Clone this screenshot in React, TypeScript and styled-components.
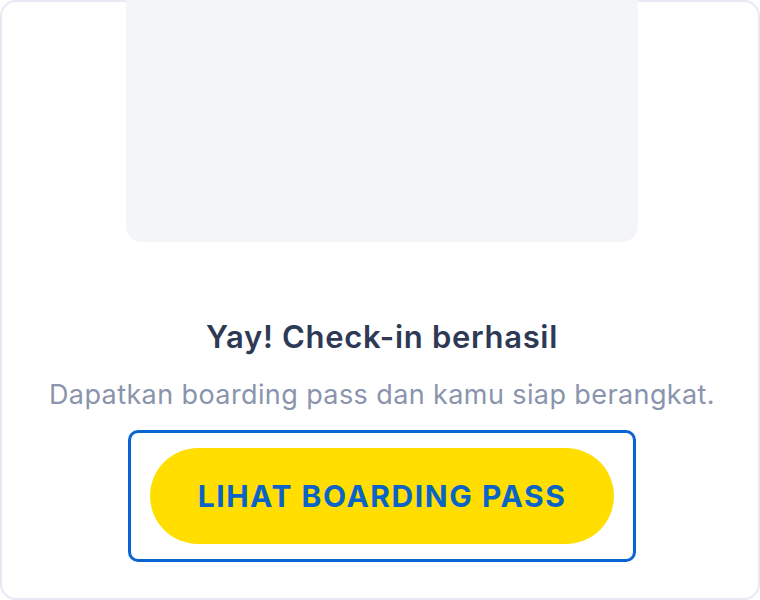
import React from "react";
import styled, { createGlobalStyle } from "styled-components";

const Global = createGlobalStyle`
  html, body { margin: 0; padding: 0; background: #ffffff; }
  * { box-sizing: border-box; }
  body { font-family: Inter, "Noto Sans", "Liberation Sans", sans-serif; }
`;

const Card = styled.section`
  width: 760px;
  height: 600px;
  padding-left: 4px;
  border: 2px solid #e8eaf3;
  border-radius: 16px;
  background: #ffffff;
  display: flex;
  flex-direction: column;
  align-items: center;
`;

const Illustration = styled.div`
  width: 512px;
  height: 242px;
  margin-top: -2px;
  background: #f4f5f9;
  border-radius: 0 0 16px 16px;
`;

const Title = styled.h2`
  margin: 75px 0 0;
  font-size: 31px;
  line-height: 40px;
  font-weight: 600;
  letter-spacing: 0.7px;
  color: #2e3a55;
  text-align: center;
`;

const Subtitle = styled.p`
  margin: 20px 0 0;
  font-size: 27px;
  line-height: 36px;
  font-weight: 400;
  letter-spacing: 0.4px;
  color: #8a94ac;
  text-align: center;
`;

const FocusRing = styled.div`
  margin-top: 17px;
  width: 508px;
  height: 132px;
  border: 3px solid #0a64d2;
  border-radius: 10px;
  display: flex;
  align-items: center;
  justify-content: center;
`;

const PrimaryButton = styled.button`
  width: 464px;
  height: 96px;
  border: none;
  border-radius: 48px;
  background: #ffde00;
  color: #0a64c8;
  font-family: Inter, "Noto Sans", "Liberation Sans", sans-serif;
  font-size: 30px;
  font-weight: 700;
  letter-spacing: 1.55px;
  text-transform: uppercase;
  cursor: pointer;
`;

export default function App() {
  return (
    <>
      <Global />
      <Card>
        <Illustration />
        <Title>Yay! Check-in berhasil</Title>
        <Subtitle>Dapatkan boarding pass dan kamu siap berangkat.</Subtitle>
        <FocusRing>
          <PrimaryButton>Lihat boarding pass</PrimaryButton>
        </FocusRing>
      </Card>
    </>
  );
}
